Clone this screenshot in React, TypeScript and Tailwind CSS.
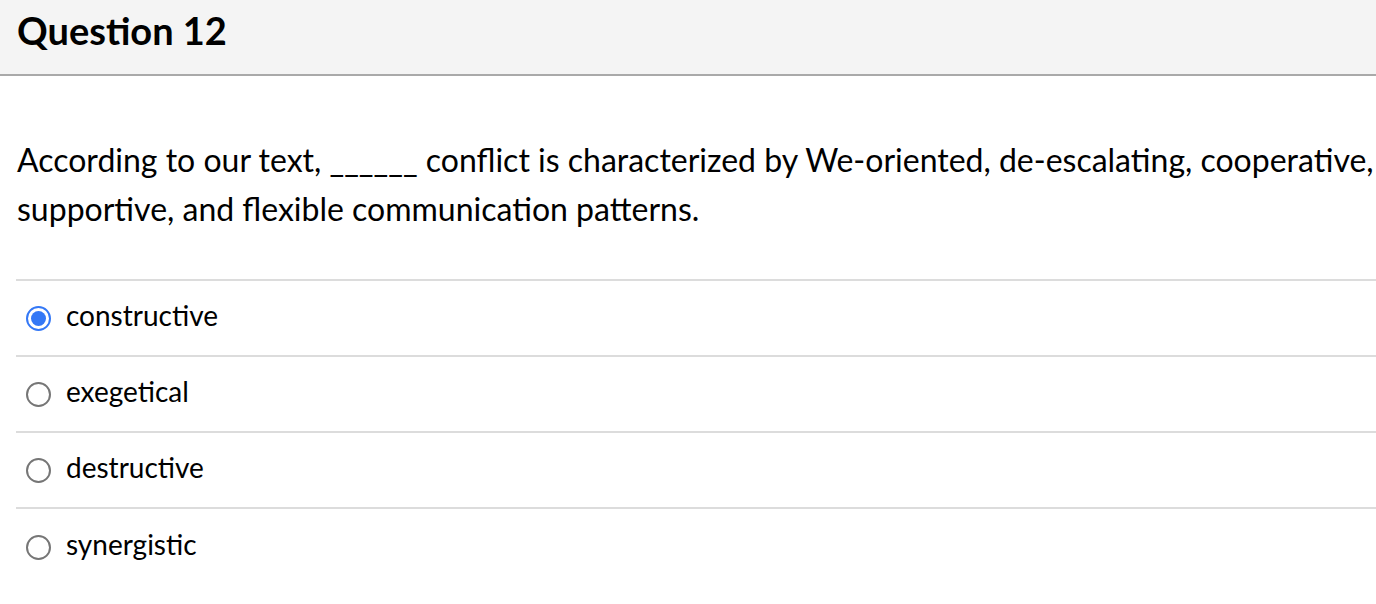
import React from "react";

const options = [
  { label: "constructive", selected: true },
  { label: "exegetical", selected: false },
  { label: "destructive", selected: false },
  { label: "synergistic", selected: false },
];

export default function App() {
  return (
    <div
      className="w-[1376px] h-[604px] bg-white text-black overflow-hidden"
      style={{ fontFamily: "Lato, 'Noto Sans', sans-serif" }}
    >
      <div className="h-[76px] bg-[#f4f4f4] border-b-2 border-[#a9a9a9] px-[17px] flex items-center">
        <h2 className="text-[38px] font-bold leading-none pb-[14px]">Question 12</h2>
      </div>
      <div className="pl-[17px] pr-[2px] pt-[59px] pb-[46px] text-[32px] leading-[49px]">
        According to our text, ______ conflict is characterized by We-oriented, de-escalating, cooperative, supportive, and flexible communication patterns.
      </div>
      <div className="ml-[16px] border-t-2 border-[#dcdcdc]">
        {options.map((o, i) => (
          <div
            key={o.label}
            className={
              "h-[76px] flex items-center pl-[10px] " +
              (i < options.length - 1 ? "border-b-2 border-[#dcdcdc]" : "")
            }
          >
            {o.selected ? (
              <span className="w-[25px] h-[25px] rounded-full border-[2.5px] border-[#3478f6] flex items-center justify-center">
                <span className="w-[15px] h-[15px] rounded-full bg-[#3478f6]" />
              </span>
            ) : (
              <span className="w-[25px] h-[25px] rounded-full border-[2px] border-[#767676]" />
            )}
            <span className="ml-[15px] text-[28px] leading-none pb-[6px]">{o.label}</span>
          </div>
        ))}
      </div>
    </div>
  );
}
